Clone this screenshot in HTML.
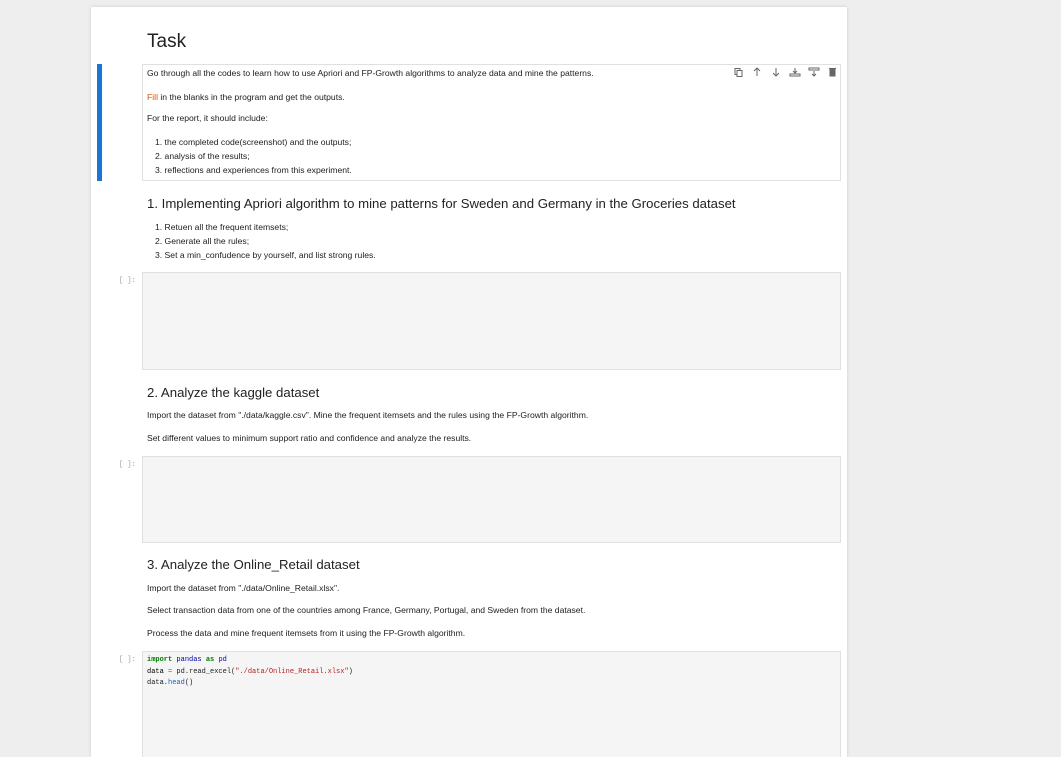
<!DOCTYPE html>
<html><head><style>
*{margin:0;padding:0;box-sizing:border-box}
html,body{width:1061px;height:757px;overflow:hidden}
body{background:#eeeeee;font-family:"Liberation Sans",sans-serif;color:#212121;position:relative}
.nb{position:absolute;left:91px;top:7px;width:756px;height:750px;background:#fff;box-shadow:0 0 3px rgba(0,0,0,.15)}
.t{position:absolute;white-space:nowrap;font-size:8.6px;line-height:10px}
.h{position:absolute;white-space:nowrap;font-size:13.2px;line-height:16px;color:#222}
.cell{position:absolute;left:142px;width:699px;background:#f5f5f5;border:1px solid #e0e0e0}
.pr{position:absolute;left:119px;font-family:"Liberation Mono",monospace;font-size:7px;color:#999}
.code{position:absolute;font-family:"Liberation Mono",monospace;font-size:7px;line-height:11.5px;white-space:pre;left:147px;top:655px}
</style></head><body>
<div class="nb"></div>
<div class="h" style="left:147px;top:31px;font-size:19px;line-height:22px">Task</div>
<div style="position:absolute;left:97px;top:64px;width:5px;height:117px;background:#1976d2"></div>
<div style="position:absolute;left:142px;top:64px;width:699px;height:117px;border:1px solid #e0e0e0;background:#fff"></div>
<svg style="position:absolute;left:733px;top:67px" width="110" height="10" viewBox="0 0 110 10" fill="none" stroke="#666" stroke-width="1">
<rect x="2" y="1.5" width="5" height="6"/><rect x="4" y="3.5" width="5" height="6" fill="#fff"/>
<path d="M24 9V1M21 4l3-3 3 3"/><path d="M43 1v8M40 6l3 3 3-3"/>
<path d="M62 1v5M60 4l2 2 2-2M57 7h10v2H57z"/><path d="M76 1h10v2H76zM81 4v5M79 7l2 2 2-2"/>
<rect x="97" y="2" width="5" height="7" fill="#666"/><path d="M96 1.5h7"/>
</svg>
<div class="t" style="left:147px;top:68px">Go through all the codes to learn how to use Apriori and FP-Growth algorithms to analyze data and mine the patterns.</div>
<div class="t" style="left:147px;top:92px"><span style="color:#e65100">Fill</span> in the blanks in the program and get the outputs.</div>
<div class="t" style="left:147px;top:113px">For the report, it should include:</div>
<div class="t" style="left:155px;top:137px">1. the completed code(screenshot) and the outputs;</div>
<div class="t" style="left:155px;top:151px">2. analysis of the results;</div>
<div class="t" style="left:155px;top:165px">3. reflections and experiences from this experiment.</div>
<div class="h" style="left:147px;top:196px">1. Implementing Apriori algorithm to mine patterns for Sweden and Germany in the Groceries dataset</div>
<div class="t" style="left:155px;top:222px">1. Retuen all the frequent itemsets;</div>
<div class="t" style="left:155px;top:236px">2. Generate all the rules;</div>
<div class="t" style="left:155px;top:250px">3. Set a min_confudence by yourself, and list strong rules.</div>
<div class="pr" style="top:277px">[ ]:</div>
<div class="cell" style="top:272px;height:98px"></div>
<div class="h" style="left:147px;top:385px">2. Analyze the kaggle dataset</div>
<div class="t" style="left:147px;top:410px">Import the dataset from "./data/kaggle.csv". Mine the frequent itemsets and the rules using the FP-Growth algorithm.</div>
<div class="t" style="left:147px;top:433px">Set different values to minimum support ratio and confidence and analyze the results.</div>
<div class="pr" style="top:461px">[ ]:</div>
<div class="cell" style="top:456px;height:87px"></div>
<div class="h" style="left:147px;top:557px">3. Analyze the Online_Retail dataset</div>
<div class="t" style="left:147px;top:583px">Import the dataset from "./data/Online_Retail.xlsx".</div>
<div class="t" style="left:147px;top:605px">Select transaction data from one of the countries among France, Germany, Portugal, and Sweden from the dataset.</div>
<div class="t" style="left:147px;top:628px">Process the data and mine frequent itemsets from it using the FP-Growth algorithm.</div>
<div class="pr" style="top:656px">[ ]:</div>
<div class="cell" style="top:651px;height:106px;border-bottom:none"></div>
<div class="code"><span style="color:#008000;font-weight:bold">import</span> <span style="color:#0000aa">pandas</span> <span style="color:#008000;font-weight:bold">as</span> <span style="color:#0000aa">pd</span>
<span style="color:#000">data</span> <span style="color:#aa22ff">=</span> pd.read_excel(<span style="color:#ba2121">"./data/Online_Retail.xlsx"</span>)
data.<span style="color:#1565c0">head</span>()</div>
</body></html>
